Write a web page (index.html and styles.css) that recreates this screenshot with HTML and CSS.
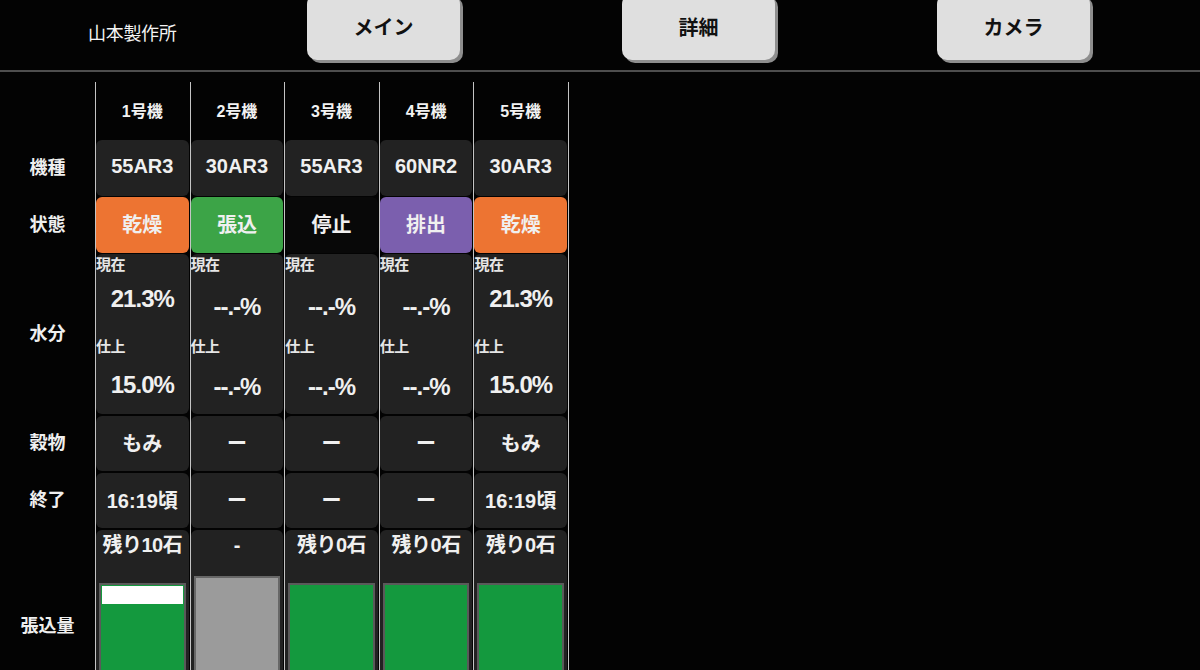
FILE: index.html
```html
<!DOCTYPE html>
<html lang="ja">
<head>
<meta charset="utf-8">
<title>山本製作所</title>
<link rel="stylesheet" href="styles.css">
</head>
<body>
<div class="screen">
  <header class="topbar">
    <div class="title">山本製作所</div>
    <div class="navbtn">メイン</div>
    <div></div>
    <div class="navbtn">詳細</div>
    <div></div>
    <div class="navbtn">カメラ</div>
  </header>

  <div class="table">
    <div class="labels">
      <div class="lab head"></div>
      <div class="lab r-kishu">機種</div>
      <div class="lab r-state">状態</div>
      <div class="lab r-moist">水分</div>
      <div class="lab r-grain">穀物</div>
      <div class="lab r-end">終了</div>
      <div class="lab r-load load-lab">張込量</div>
    </div>

    <div class="col">
      <div class="head">1号機</div>
      <div class="cell r-kishu">55AR3</div>
      <div class="cell r-state st-dry">乾燥</div>
      <div class="cell r-moist">
        <div class="m-lab">現在</div>
        <div class="m-val cur">21.3%</div>
        <div class="m-lab">仕上</div>
        <div class="m-val fin">15.0%</div>
      </div>
      <div class="cell r-grain">もみ</div>
      <div class="cell r-end">16:19頃</div>
      <div class="cell r-load">
        <div class="remain">残り10石</div>
        <div class="bar"><div class="bar-empty" style="height:18px"></div></div>
      </div>
    </div>

    <div class="col">
      <div class="head">2号機</div>
      <div class="cell r-kishu">30AR3</div>
      <div class="cell r-state st-fill">張込</div>
      <div class="cell r-moist">
        <div class="m-lab">現在</div>
        <div class="m-val cur nodata">--.-%</div>
        <div class="m-lab">仕上</div>
        <div class="m-val fin nodata">--.-%</div>
      </div>
      <div class="cell r-grain">ー</div>
      <div class="cell r-end">ー</div>
      <div class="cell r-load">
        <div class="remain">-</div>
        <div class="bar idle"></div>
      </div>
    </div>

    <div class="col">
      <div class="head">3号機</div>
      <div class="cell r-kishu">55AR3</div>
      <div class="cell r-state st-stop">停止</div>
      <div class="cell r-moist">
        <div class="m-lab">現在</div>
        <div class="m-val cur nodata">--.-%</div>
        <div class="m-lab">仕上</div>
        <div class="m-val fin nodata">--.-%</div>
      </div>
      <div class="cell r-grain">ー</div>
      <div class="cell r-end">ー</div>
      <div class="cell r-load">
        <div class="remain">残り0石</div>
        <div class="bar"></div>
      </div>
    </div>

    <div class="col">
      <div class="head">4号機</div>
      <div class="cell r-kishu">60NR2</div>
      <div class="cell r-state st-out">排出</div>
      <div class="cell r-moist">
        <div class="m-lab">現在</div>
        <div class="m-val cur nodata">--.-%</div>
        <div class="m-lab">仕上</div>
        <div class="m-val fin nodata">--.-%</div>
      </div>
      <div class="cell r-grain">ー</div>
      <div class="cell r-end">ー</div>
      <div class="cell r-load">
        <div class="remain">残り0石</div>
        <div class="bar"></div>
      </div>
    </div>

    <div class="col last">
      <div class="head">5号機</div>
      <div class="cell r-kishu">30AR3</div>
      <div class="cell r-state st-dry">乾燥</div>
      <div class="cell r-moist">
        <div class="m-lab">現在</div>
        <div class="m-val cur">21.3%</div>
        <div class="m-lab">仕上</div>
        <div class="m-val fin">15.0%</div>
      </div>
      <div class="cell r-grain">もみ</div>
      <div class="cell r-end">16:19頃</div>
      <div class="cell r-load">
        <div class="remain">残り0石</div>
        <div class="bar"></div>
      </div>
    </div>
  </div>
</div>
</body>
</html>
```

FILE: styles.css
```css
* { box-sizing: border-box; }

html, body {
  margin: 0;
  padding: 0;
  background: #030303;
  width: 1200px;
  height: 670px;
  overflow: hidden;
}

body {
  font-family: "Liberation Sans", "Noto Sans CJK JP", sans-serif;
  color: #f2f2f2;
}

.screen {
  width: 1200px;
  height: 670px;
  overflow: hidden;
}

/* ---------- top bar ---------- */
.topbar {
  height: 72px;
  border-bottom: 2px solid #4e4e4e;
  display: grid;
  grid-template-columns: 307px 156px 159px 156px 159px 156px;
  align-items: start;
}

.title {
  font-family: "Noto Sans CJK JP", sans-serif;
  font-size: 18px;
  line-height: 20px;
  margin-top: 22px;
  padding-left: 88px;
  color: #f4f4f4;
  letter-spacing: -0.3px;
}

.navbtn {
  width: 153px;
  height: 66px;
  margin-top: -6px;
  padding-bottom: 2px;
  background: #dfdfdf;
  border-radius: 10px;
  box-shadow: 3px 3px 0 #8e8e8e;
  display: flex;
  align-items: center;
  justify-content: center;
  font-family: "Noto Sans CJK JP", sans-serif;
  font-weight: 700;
  font-size: 20px;
  color: #111;
}

/* ---------- table ---------- */
.table {
  margin-top: 10px;
  display: flex;
  align-items: flex-start;
}

.labels {
  width: 95px;
  display: flex;
  flex-direction: column;
}

.lab {
  display: flex;
  align-items: center;
  justify-content: center;
  font-weight: 700;
  font-size: 18px;
  color: #efefef;
  padding-bottom: 5px;
}

.col {
  width: 94.6px;
  border-left: 1px solid #c4c4c4;
  display: flex;
  flex-direction: column;
  padding-right: 1px;
  height: 600px;
}

.col.last {
  border-right: 1px solid #c4c4c4;
  width: 95.6px;
}

.head {
  height: 58px;
  display: flex;
  align-items: center;
  justify-content: center;
  font-weight: 700;
  font-size: 16px;
  padding-bottom: 3px;
}

.cell {
  background: #222222;
  border-radius: 6px;
  display: flex;
  align-items: center;
  justify-content: center;
  font-weight: 700;
  font-size: 20px;
  color: #f0f0f0;
  padding-bottom: 3px;
}

.r-kishu { height: 56px; margin-bottom: 1px; }
.r-state { height: 56px; margin-bottom: 1px; }
.r-moist { height: 160px; margin-bottom: 2px; }
.r-grain { height: 55px; margin-bottom: 2px; }
.r-end   { height: 55px; margin-bottom: 2px; }
.r-load  { height: 150px; }

.st-dry  { background: #ed7432; }
.st-fill { background: #3ca447; }
.st-stop { background: #080808; }
.st-out  { background: #7b5fae; }

/* moisture cell */
.cell.r-moist {
  flex-direction: column;
  align-items: stretch;
  justify-content: flex-start;
  padding-bottom: 0;
}

.m-lab {
  height: 18px;
  line-height: 18px;
  font-size: 15px;
  font-weight: 700;
  color: #e6e6e6;
  text-align: left;
  letter-spacing: -0.5px;
}

.m-lab:first-child { margin-top: 2px; }

.m-val {
  font-size: 24px;
  line-height: 24px;
  letter-spacing: -1px;
  text-align: center;
  font-weight: 700;
}

.m-val.cur { height: 64px; padding-top: 13px; }
.m-val.cur.nodata { padding-top: 21px; }
.m-val.fin { height: 58px; padding-top: 17px; }
.m-val.fin.nodata { padding-top: 19px; }

/* load cell */
.cell.r-load {
  flex-direction: column;
  align-items: stretch;
  justify-content: flex-start;
  border-radius: 6px 6px 0 0;
  padding-bottom: 0;
}

.remain {
  height: 24px;
  line-height: 24px;
  margin-top: 3px;
  text-align: center;
  font-size: 20px;
  letter-spacing: -0.5px;
}

.bar {
  margin: 26px 3px 0;
  height: 110px;
  border: 2px solid #5a5a5a;
  background: #14993e;
  padding: 1px;
}

.bar-empty {
  background: #ffffff;
}

.bar.idle {
  margin-top: 19px;
  background: #9b9b9b;
  border-color: #676767;
}

.load-lab {
  align-items: flex-start;
  padding-top: 84px;
  padding-bottom: 0;
  line-height: 24px;
}
```
